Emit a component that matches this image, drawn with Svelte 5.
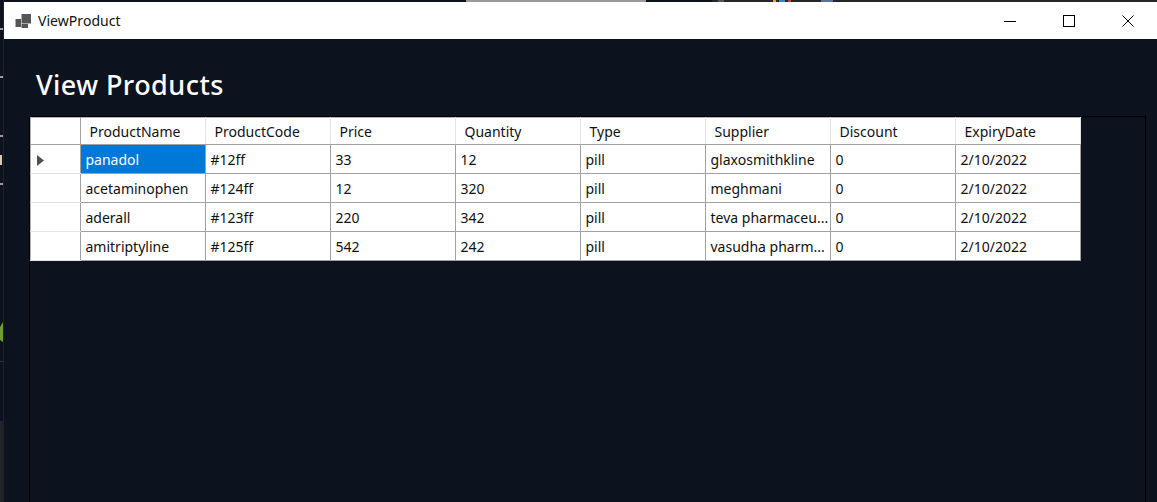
<script>
	const columns = ['ProductName', 'ProductCode', 'Price', 'Quantity', 'Type', 'Supplier', 'Discount', 'ExpiryDate'];
	const rows = [
		['panadol', '#12ff', '33', '12', 'pill', 'glaxosmithkline', '0', '2/10/2022'],
		['acetaminophen', '#124ff', '12', '320', 'pill', 'meghmani', '0', '2/10/2022'],
		['aderall', '#123ff', '220', '342', 'pill', 'teva pharmaceu...', '0', '2/10/2022'],
		['amitriptyline', '#125ff', '542', '242', 'pill', 'vasudha pharm...', '0', '2/10/2022']
	];
	// bits of the desktop that show above the window
	const topbits = [
		{ left: 466, width: 180, color: '#9a9a9a' },
		{ left: 712, width: 445, color: '#262626' },
		{ left: 718, width: 6, color: '#555' },
		{ left: 773, width: 3, color: '#d9a520' },
		{ left: 779, width: 6, color: '#3f7fd0' },
		{ left: 788, width: 3, color: '#c8402f' },
		{ left: 821, width: 12, color: '#5a7299' }
	];
	const ticks = [28, 76, 135, 183];
</script>

<div class="desktop">
	{#each topbits as bit}
		<span class="topbit" style="left: {bit.left}px; width: {bit.width}px; background: {bit.color}"></span>
	{/each}
	<span class="edge"></span>
	{#each ticks as top}
		<span class="tick" style="top: {top}px"></span>
	{/each}
	<span class="glyph"></span>
	<span class="leaf"></span>
	<span class="faint"></span>
	<span class="taskbar"></span>

	<div class="window">
		<div class="titlebar">
			<svg class="appicon" width="17" height="15" viewBox="0 0 17 15">
				<rect x="0.5" y="5" width="5.5" height="8" fill="#555" />
				<rect x="6.5" y="0" width="9.5" height="9.5" fill="#555" />
				<rect x="6.5" y="10" width="6.5" height="4" fill="#555" />
			</svg>
			<span class="title">ViewProduct</span>
			<div class="controls">
				<svg width="12" height="12" viewBox="0 0 12 12"><path d="M0 6.5H12" stroke="#000" fill="none" /></svg>
				<svg width="12" height="12" viewBox="0 0 12 12"><rect x="0.5" y="0.5" width="11" height="11" stroke="#000" fill="none" /></svg>
				<svg width="12" height="12" viewBox="0 0 12 12"><path d="M0.5 0.5L11.5 11.5M11.5 0.5L0.5 11.5" stroke="#000" fill="none" /></svg>
			</div>
		</div>

		<div class="content">
			<h1>View Products</h1>
			<div class="panel">
				<table>
					<thead>
						<tr>
							<th class="rowhead"></th>
							{#each columns as col}
								<th>{col}</th>
							{/each}
						</tr>
					</thead>
					<tbody>
						{#each rows as row, i}
							<tr>
								<td class="rowhead">
									{#if i === 0}
										<svg class="arrow" width="7" height="11" viewBox="0 0 7 11"><path d="M0 0L7 5.5L0 11Z" fill="#505050" /></svg>
									{/if}
								</td>
								{#each row as cell, j}
									<td class:selected={i === 0 && j === 0}>{cell}</td>
								{/each}
							</tr>
						{/each}
					</tbody>
				</table>
			</div>
		</div>
	</div>
</div>

<style>
	:global(body) {
		margin: 0;
		overflow: hidden;
		background: #0d131e;
	}

	.desktop {
		position: relative;
		box-sizing: border-box;
		width: 1157px;
		height: 502px;
		padding: 2px 0 0 4px;
		background: #0d131e;
		font-family: 'Noto Sans', 'Open Sans', sans-serif;
		overflow: hidden;
	}

	.topbit {
		position: absolute;
		top: 0;
		height: 2px;
	}

	.edge {
		position: absolute;
		left: 3px;
		top: 0;
		width: 1px;
		height: 502px;
		background: #1b2130;
	}

	.tick {
		position: absolute;
		left: 0;
		width: 3px;
		height: 2px;
		background: #9c9c9c;
	}

	.glyph {
		position: absolute;
		left: 0;
		top: 155px;
		width: 2px;
		height: 10px;
		background: #d8c8b8;
	}

	.leaf {
		position: absolute;
		left: 0;
		top: 322px;
		width: 3px;
		height: 20px;
		background: #6f9a35;
		clip-path: polygon(100% 0, 100% 100%, 0 90%, 0 25%);
	}

	.faint {
		position: absolute;
		left: 0;
		top: 361px;
		width: 3px;
		height: 1px;
		background: #2a2f38;
	}

	.taskbar {
		position: absolute;
		left: 0;
		top: 421px;
		width: 3px;
		height: 81px;
		background: #23242a;
	}

	.window {
		position: relative;
		display: flex;
		flex-direction: column;
		height: 500px;
	}

	.titlebar {
		display: flex;
		align-items: center;
		flex: none;
		height: 37px;
		padding-left: 11px;
		background: #fff;
	}

	.appicon {
		margin-right: 6px;
		margin-top: 1px;
	}

	.title {
		font-size: 14px;
		letter-spacing: 0.05px;
		color: #111;
	}

	.controls {
		display: flex;
		align-items: center;
		gap: 47px;
		margin-left: auto;
		padding-right: 23px;
	}

	.content {
		flex: 1;
		display: flex;
		flex-direction: column;
		padding: 0 11px 0 25px;
		min-height: 0;
	}

	h1 {
		margin: 27px 0 0 7px;
		height: 50px;
		font-size: 27px;
		line-height: 38px;
		font-weight: 500;
		letter-spacing: 0.45px;
		color: #fff;
	}

	.panel {
		flex: 1;
		border: 1px solid #000;
		border-bottom: 0;
	}

	table {
		border-collapse: collapse;
		table-layout: fixed;
		width: 1051px;
		background: #fff;
		font-size: 14px;
		color: #111;
	}

	th,
	td {
		box-sizing: border-box;
		width: 125px;
		padding: 1px 0 0 4.5px;
		text-align: left;
		font-weight: 400;
		white-space: nowrap;
		overflow: hidden;
		border: 1px solid #a0a0a0;
		height: 29px;
	}

	th {
		height: 27px;
		padding-left: 8.5px;
		border-top: 1px solid #b5b5b5;
		border-left-color: #e3e3e3;
		border-right-color: #e3e3e3;
	}

	th:first-child,
	td:first-child {
		border-left: 1px solid #b5b5b5;
	}

	.rowhead {
		width: 50px;
		padding: 2px 0 0 6px;
		border-top-color: #e3e3e3;
		border-bottom-color: #e3e3e3;
		border-right-color: #a0a0a0;
	}

	th.rowhead {
		border-top-color: #b5b5b5;
		border-bottom-color: #a0a0a0;
	}

	.arrow {
		display: block;
	}

	.selected {
		background: #0078d7;
		color: #fff;
	}
</style>
